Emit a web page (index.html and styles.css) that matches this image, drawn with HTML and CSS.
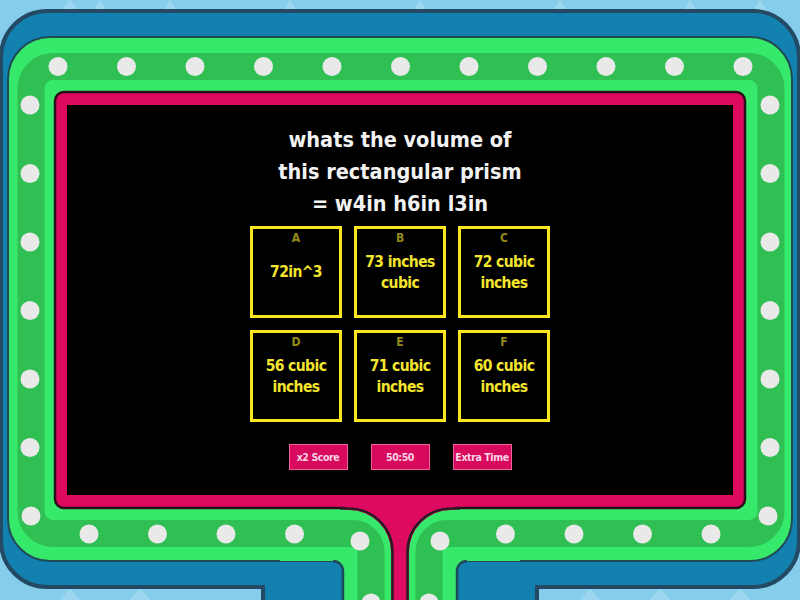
FILE: index.html
```html
<!DOCTYPE html>
<html lang="en">
<head>
<meta charset="utf-8">
<title>Game Show Quiz</title>
<link rel="stylesheet" href="styles.css">
</head>
<body>
<div class="stage">
  <svg class="frame" viewBox="0 0 800 600" width="800" height="600" aria-hidden="true">
    <rect width="800" height="600" fill="#86cdeb"/>
    <g fill="#9bd7f0">
      <polygon points="70,0 80,12 60,12"/>
      <polygon points="100,0 108,12 92,12"/>
      <polygon points="170,0 178,12 162,12"/>
      <polygon points="290,0 298,12 282,12"/>
      <polygon points="420,0 428,12 412,12"/>
      <polygon points="560,0 568,12 552,12"/>
      <polygon points="690,0 698,12 682,12"/>
      <polygon points="760,0 768,12 752,12"/>
      <polygon points="60,600 70,588 80,600"/>
      <polygon points="130,600 140,588 150,600"/>
      <polygon points="580,600 590,588 600,600"/>
      <polygon points="650,600 660,588 670,600"/>
      <polygon points="730,600 740,588 750,600"/>
    </g>
    <rect x="1" y="11" width="798" height="576" rx="46" fill="#1381b0" stroke="#244a63" stroke-width="4"/>
    <path d="M263 587 V612 H537 V587" fill="#1381b0" stroke="#244a63" stroke-width="4"/>
    <rect x="265" y="570" width="270" height="42" fill="#1381b0"/>
    <rect x="8" y="37" width="784" height="524" rx="42" fill="#37e96b" stroke="#1f4b57" stroke-width="2"/>
    <rect x="31" y="66.5" width="740" height="467" rx="22" fill="none" stroke="#30bf53" stroke-width="27"/>
    <rect x="55" y="92" width="690" height="416" rx="9" fill="#de0a5f" stroke="#2b0d1c" stroke-width="2.5"/>
    <rect x="67" y="105" width="666" height="390" fill="#000"/>
    <rect x="345" y="500" width="110" height="60" fill="#de0a5f"/>
    <rect x="388" y="500" width="24" height="112" fill="#de0a5f"/>
    <path d="M280 510 H349 A42 42 0 0 1 391 552 V612 H343 V571 A10 10 0 0 0 333 561 H280 Z" fill="#37e96b"/>
    <path d="M520 510 H451 A42 42 0 0 0 409 552 V612 H457 V571 A10 10 0 0 1 467 561 H520 Z" fill="#37e96b"/>
    <path d="M280 533.5 H353 A18 18 0 0 1 371 551.5 V612" fill="none" stroke="#30bf53" stroke-width="27"/>
    <path d="M520 533.5 H447 A18 18 0 0 0 429 551.5 V612" fill="none" stroke="#30bf53" stroke-width="27"/>
    <g fill="none" stroke="#2b1a24" stroke-width="2.5">
      <path d="M340 508.5 H349 A43.5 43.5 0 0 1 392.5 552 V612"/>
      <path d="M460 508.5 H451 A43.5 43.5 0 0 0 407.5 552 V612"/>
    </g>
    <g fill="none" stroke="#1f4b57" stroke-width="2.5">
      <path d="M333 561 A10 10 0 0 1 343 571 V612"/>
      <path d="M467 561 A10 10 0 0 0 457 571 V612"/>
    </g>
    <g fill="#e9e9e9">
      <circle cx="58" cy="66.5" r="9.5"/><circle cx="126.5" cy="66.5" r="9.5"/><circle cx="195" cy="66.5" r="9.5"/>
      <circle cx="263.5" cy="66.5" r="9.5"/><circle cx="332" cy="66.5" r="9.5"/><circle cx="400.5" cy="66.5" r="9.5"/>
      <circle cx="469" cy="66.5" r="9.5"/><circle cx="537.5" cy="66.5" r="9.5"/><circle cx="606" cy="66.5" r="9.5"/>
      <circle cx="674.5" cy="66.5" r="9.5"/><circle cx="743" cy="66.5" r="9.5"/>
      <circle cx="30" cy="105" r="9.5"/><circle cx="30" cy="173.5" r="9.5"/><circle cx="30" cy="242" r="9.5"/>
      <circle cx="30" cy="310.5" r="9.5"/><circle cx="30" cy="379" r="9.5"/><circle cx="30" cy="447.5" r="9.5"/>
      <circle cx="31" cy="516" r="9.5"/>
      <circle cx="770" cy="105" r="9.5"/><circle cx="770" cy="173.5" r="9.5"/><circle cx="770" cy="242" r="9.5"/>
      <circle cx="770" cy="310.5" r="9.5"/><circle cx="770" cy="379" r="9.5"/><circle cx="770" cy="447.5" r="9.5"/>
      <circle cx="768" cy="516" r="9.5"/>
      <circle cx="89" cy="534" r="9.5"/><circle cx="157.5" cy="534" r="9.5"/><circle cx="226" cy="534" r="9.5"/>
      <circle cx="294.5" cy="534" r="9.5"/><circle cx="360" cy="541" r="9.5"/><circle cx="371" cy="603" r="9.5"/>
      <circle cx="711" cy="534" r="9.5"/><circle cx="642.5" cy="534" r="9.5"/><circle cx="574" cy="534" r="9.5"/>
      <circle cx="505.5" cy="534" r="9.5"/><circle cx="440" cy="541" r="9.5"/><circle cx="429" cy="603" r="9.5"/>
    </g>
  </svg>

  <main class="screen">
    <h1 class="question">whats the volume of<br>this rectangular prism<br>= w4in h6in l3in</h1>
    <div class="answers">
      <div class="answer"><span class="letter">A</span><span class="text">72in^3</span></div>
      <div class="answer"><span class="letter">B</span><span class="text">73 inches cubic</span></div>
      <div class="answer"><span class="letter">C</span><span class="text">72 cubic inches</span></div>
      <div class="answer"><span class="letter">D</span><span class="text">56 cubic inches</span></div>
      <div class="answer"><span class="letter">E</span><span class="text">71 cubic inches</span></div>
      <div class="answer"><span class="letter">F</span><span class="text">60 cubic inches</span></div>
    </div>
    <div class="powerups">
      <button class="powerup">x2 Score</button>
      <button class="powerup">50:50</button>
      <button class="powerup">Extra Time</button>
    </div>
  </main>
</div>
</body>
</html>
```

FILE: styles.css
```css
* { box-sizing: border-box; }

html, body {
  margin: 0;
  padding: 0;
  background: #86cdeb;
}

.stage {
  position: relative;
  width: 800px;
  height: 600px;
  overflow: hidden;
  font-family: "DejaVu Sans Condensed", "DejaVu Sans", sans-serif;
  font-stretch: condensed;
}

.frame {
  position: absolute;
  top: 0;
  left: 0;
  display: block;
}

.screen {
  position: relative;
  display: flex;
  flex-direction: column;
  align-items: center;
  padding-top: 124px;
  height: 600px;
}

.question {
  margin: 0;
  color: #f2f2f2;
  font-size: 21.5px;
  line-height: 32px;
  font-weight: bold;
  text-align: center;
}

.answers {
  margin-top: 6px;
  display: grid;
  grid-template-columns: repeat(3, 92px);
  grid-auto-rows: 92px;
  gap: 12px;
}

.answer {
  display: flex;
  flex-direction: column;
  align-items: center;
  border: 3px solid #f6e81c;
  padding-bottom: 17px;
  color: #f4e52e;
}

.letter {
  height: 18px;
  padding-top: 3px;
  font-size: 12px;
  line-height: 13px;
  color: #948a18;
  font-weight: bold;
}

.text {
  flex: 1;
  display: flex;
  align-items: center;
  justify-content: center;
  text-align: center;
  font-size: 15.5px;
  line-height: 21px;
  font-weight: bold;
  letter-spacing: -0.6px;
  padding: 0 6px;
}

.powerups {
  margin-top: 22px;
  display: flex;
  gap: 23px;
}

.powerup {
  width: 59px;
  height: 26px;
  padding: 0;
  background: #d70a5e;
  border: 1.5px solid #f0609c;
  border-radius: 0;
  color: #fbd3e4;
  font-family: "DejaVu Sans Condensed", "DejaVu Sans", sans-serif;
  font-stretch: condensed;
  font-size: 10.5px;
  font-weight: bold;
  letter-spacing: -0.4px;
}
```
